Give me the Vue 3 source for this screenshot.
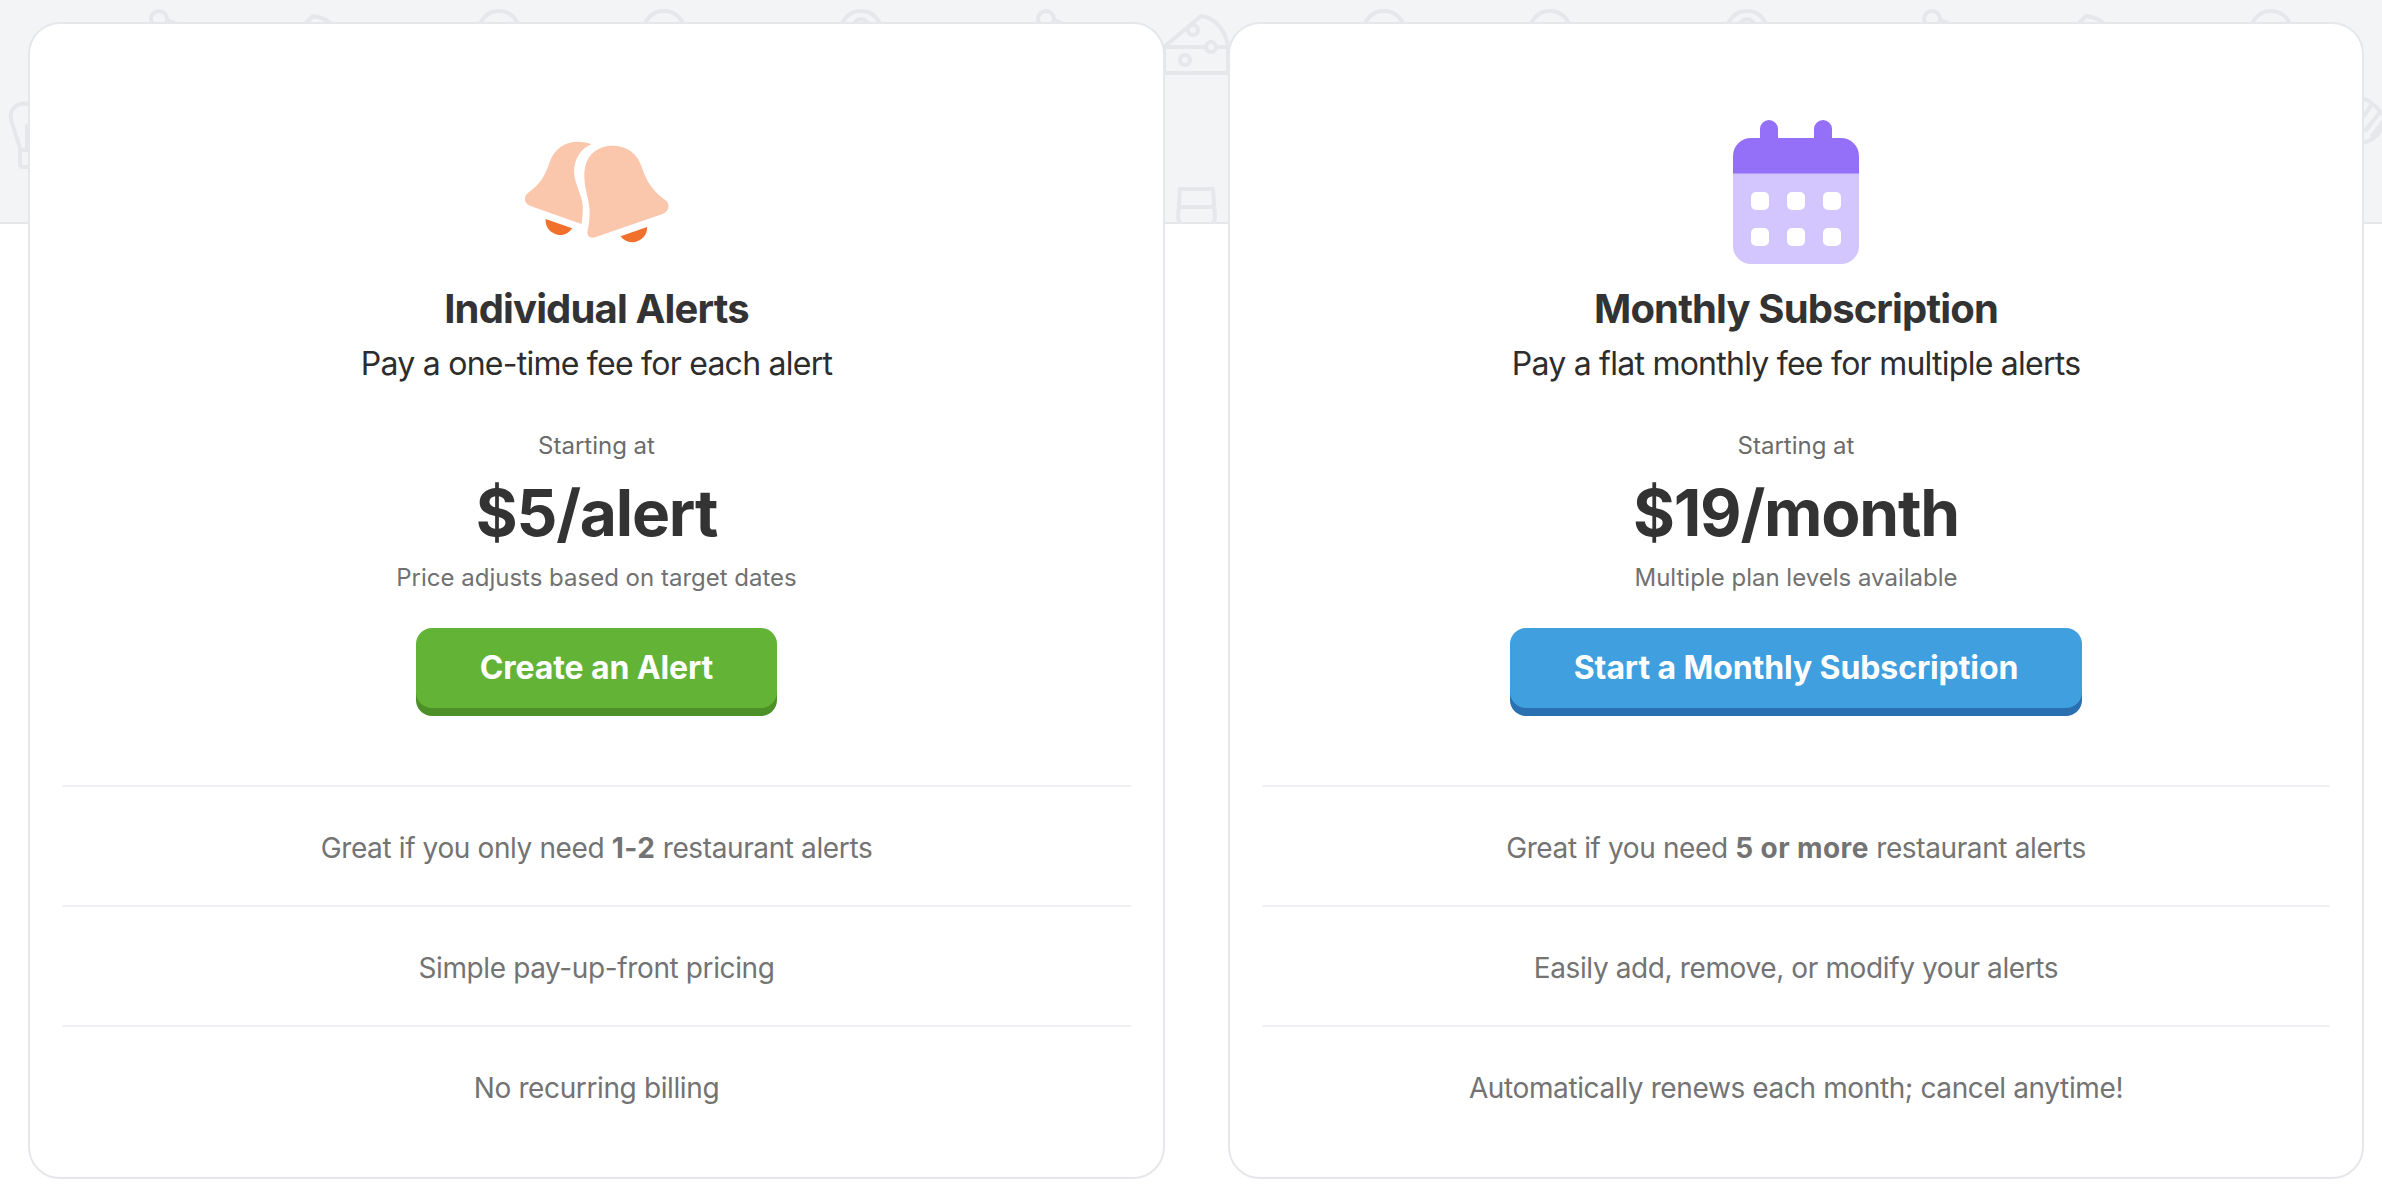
<script setup>
const plans = [
  {
    key: 'alerts',
    title: 'Individual Alerts',
    sub: 'Pay a one-time fee for each alert',
    price: '$5/alert',
    note: 'Price adjusts based on target dates',
    cta: 'Create an Alert',
    tone: 'green',
    rows: [
      { pre: 'Great if you only need ', bold: '1-2', post: ' restaurant alerts' },
      { pre: 'Simple pay-up-front pricing' },
      { pre: 'No recurring billing' }
    ]
  },
  {
    key: 'monthly',
    title: 'Monthly Subscription',
    sub: 'Pay a flat monthly fee for multiple alerts',
    price: '$19/month',
    note: 'Multiple plan levels available',
    cta: 'Start a Monthly Subscription',
    tone: 'blue',
    rows: [
      { pre: 'Great if you need ', bold: '5 or more', post: ' restaurant alerts' },
      { pre: 'Easily add, remove, or modify your alerts' },
      { pre: 'Automatically renews each month; cancel anytime!' }
    ]
  }
]
const cells = [
  [27, 72], [63, 72], [99, 72],
  [27, 108], [63, 108], [99, 108]
]
const domes = [499, 664, 861, 1384, 1550, 1747, 2271]
const inner = [861, 1747]
const rings = [159, 1046, 1932]
const wedges = [317, 2090]
</script>

<template>
  <div class="page">
    <div class="band">
      <svg class="pattern" width="2382" height="222" viewBox="0 0 2382 222" fill="none" stroke="#e5e7eb" stroke-width="4" stroke-linecap="round" stroke-linejoin="round">
        <path v-for="x in domes" :key="'d' + x" :d="`M${x - 20} 26 C${x - 16} 16 ${x - 9} 11 ${x} 11 C${x + 9} 11 ${x + 16} 16 ${x + 20} 26`" />
        <path v-for="x in inner" :key="'i' + x" :d="`M${x - 9} 26 C${x - 6} 21 ${x - 3} 19 ${x} 19 C${x + 3} 19 ${x + 6} 21 ${x + 9} 26`" />
        <g v-for="x in rings" :key="'r' + x">
          <circle :cx="x" cy="19" r="8" />
          <path :d="`M${x + 8} 20 L${x + 16} 23`" />
        </g>
        <path v-for="x in wedges" :key="'w' + x" :d="`M${x - 14} 26 L${x - 4} 16 C${x + 4} 17 ${x + 11} 20 ${x + 16} 26`" />
        <!-- cheese in the gap -->
        <path d="M1164 47 L1201 16 C1216 18 1226 31 1228 47 Z" />
        <path d="M1164 47 V73 H1228 V47" />
        <circle cx="1193" cy="30" r="5" fill="#f3f4f6" />
        <circle cx="1211" cy="47" r="5" fill="#f3f4f6" />
        <circle cx="1185" cy="60" r="5" />
        <!-- cup in the gap -->
        <path d="M1180 189 H1213 L1215 218 M1180 189 L1178 218 M1179 207 H1214 M1178 218 L1180 224 M1215 218 L1213 224" />
        <!-- bulb at the left edge -->
        <path d="M34 105 C18 100 9 108 11 120 L20 148 V164 Q20 167 23 167 H34 M20 150 H34 M27 126 V148" />
        <!-- whisk at the right edge -->
        <path d="M2360 98 C2368 98 2378 108 2386 118 C2384 128 2376 142 2360 143 M2364 116 L2372 104 M2366 130 L2380 112 M2372 136 L2386 118" />
      </svg>
    </div>
    <div class="cards">
      <section v-for="plan in plans" :key="plan.key" class="card">
        <svg v-if="plan.key === 'alerts'" class="art" viewBox="103.5 0 432 432" aria-hidden="true">
          <path fill="#fac6ac" d="M303 73 C270 85 250 120 251 155 C252 190 268 210 275 245 C279 270 276 290 273 312 L120 258 C101 251 97 230 113 218 C148 195 165 165 178 125 C192 85 225 65 262 65 C278 65 292 68 303 73 Z" />
          <path fill="#fac6ac" d="M365 77 C325 77 293 100 284 140 C277 175 285 205 293 240 C300 270 298 300 291 335 C289 350 300 356 314 352 L518 281 C536 274 540 253 525 241 C490 215 470 190 455 145 C442 100 410 77 365 77 Z" />
          <path fill="#f1702c" d="M165 297 L245 325 C235 340 220 347 205 345 C180 340 165 325 165 297 Z" />
          <path fill="#f1702c" d="M470 321 L390 349 C400 362 415 368 430 367 C455 362 470 345 470 321 Z" />
        </svg>
        <svg v-else class="art" viewBox="0 0 144 144" aria-hidden="true">
          <path fill="#d3c5fd" d="M9 53 H135 V126 A18 18 0 0 1 117 144 H27 A18 18 0 0 1 9 126 Z" />
          <path fill="#9370f7" d="M27 18 H36 V9 A9 9 0 0 1 54 9 V18 H90 V9 A9 9 0 0 1 108 9 V18 H117 A18 18 0 0 1 135 36 V53.5 H9 V36 A18 18 0 0 1 27 18 Z" />
          <rect v-for="c in cells" :key="c.join()" :x="c[0]" :y="c[1]" width="18" height="18" rx="5" fill="#fff" />
        </svg>

        <h2 class="title">{{ plan.title }}</h2>
        <p class="sub">{{ plan.sub }}</p>
        <p class="start">Starting at</p>
        <p class="price">{{ plan.price }}</p>
        <p class="note">{{ plan.note }}</p>
        <a class="cta" :class="plan.tone">{{ plan.cta }}</a>

        <ul class="rows">
          <li v-for="(row, i) in plan.rows" :key="i" class="row">{{ row.pre }}<strong v-if="row.bold">{{ row.bold }}</strong>{{ row.post }}</li>
        </ul>
      </section>
    </div>
  </div>
</template>

<style scoped>
.page {
  display: grid;
  width: 2382px;
  min-height: 1194px;
  background: #fff;
  font-family: Inter, "Liberation Sans", sans-serif;
}
.band,
.cards {
  grid-area: 1 / 1;
}
.band {
  height: 222px;
  background: #f3f4f6;
  border-bottom: 2px solid #e5e7eb;
  overflow: hidden;
}
.pattern {
  display: block;
}
.cards {
  z-index: 1;
  display: grid;
  grid-template-columns: 1137px 1136px;
  column-gap: 63px;
  align-self: start;
  padding: 22px 0 0 28px;
}
.card {
  box-sizing: border-box;
  height: 1157px;
  padding: 96px 32px 0;
  background: #fff;
  border: 2px solid #e5e7eb;
  border-radius: 32px;
  text-align: center;
}
.art {
  display: block;
  width: 144px;
  height: 144px;
  margin: 0 auto;
}
.title {
  margin: 20.5px 0 0;
  font-size: 40px;
  line-height: 48px;
  font-weight: 700;
  letter-spacing: -0.85px;
  color: #333;
}
.sub {
  margin: 7.5px 0 0;
  font-size: 32px;
  line-height: 48px;
  letter-spacing: -0.75px;
  color: #2d2d2d;
}
.start {
  margin: 41.5px 0 0;
  font-size: 24px;
  line-height: 32px;
  color: #6b6b6b;
}
.price {
  margin: 11px 0 0;
  font-size: 64px;
  line-height: 80px;
  font-weight: 700;
  letter-spacing: -1.2px;
  color: #333;
}
.note {
  margin: 9px 0 0;
  font-size: 24px;
  line-height: 32px;
  color: #717171;
}
.cta {
  display: block;
  width: fit-content;
  height: 80px;
  margin: 34px auto 0;
  padding: 0 64px;
  border-radius: 16px;
  font-size: 32px;
  line-height: 80px;
  font-weight: 700;
  letter-spacing: -0.1px;
  color: #fff;
}
.green {
  background: #63b337;
  box-shadow: 0 8px 0 #4e9028;
}
.blue {
  background: #3f9fdf;
  box-shadow: 0 8px 0 #2a6fb0;
}
.rows {
  margin: 77px 0 0;
  padding: 0;
  list-style: none;
}
.row {
  height: 118px;
  border-top: 2px solid #eef0f3;
  font-size: 28px;
  line-height: 122px;
  letter-spacing: -0.38px;
  color: #737373;
}
strong {
  font-weight: 700;
  letter-spacing: 0.4px;
}
</style>
